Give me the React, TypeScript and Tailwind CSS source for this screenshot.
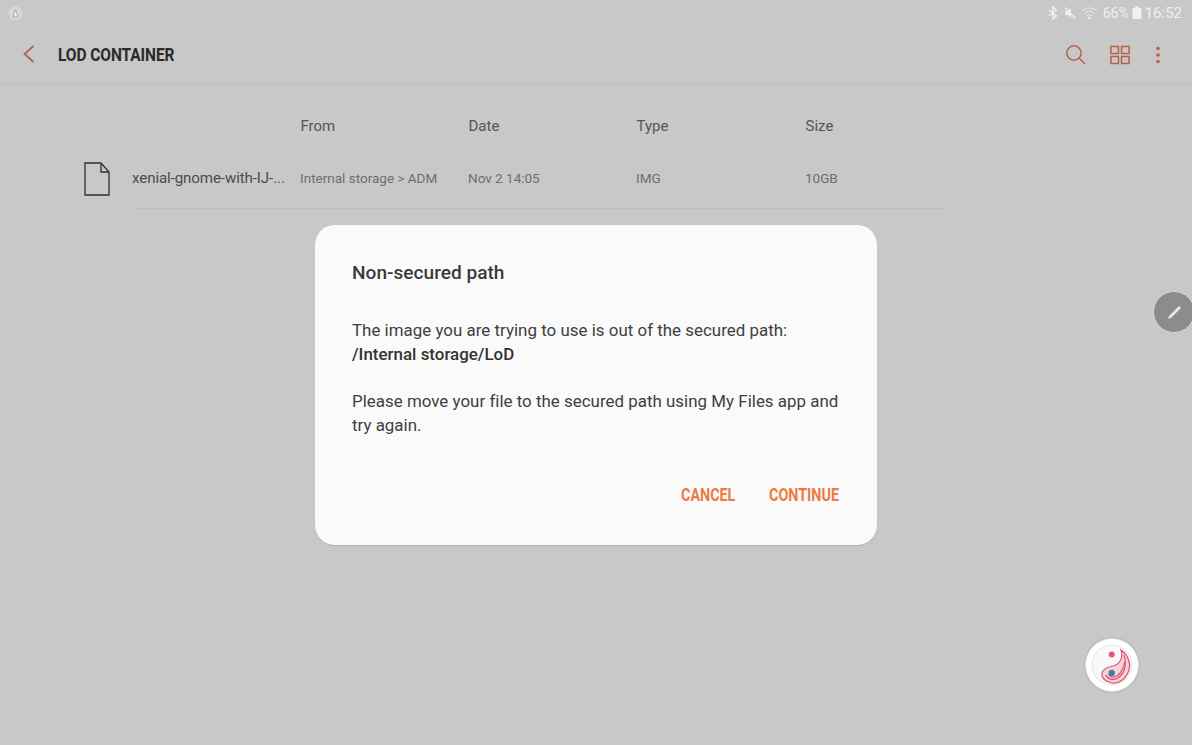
export default function App() {
  const rose = "#b5604a";
  return (
    <div className="relative w-[1192px] h-[745px] overflow-hidden bg-[#c8c8c8] font-['Roboto',sans-serif]">
      {/* status bar */}
      <div className="flex items-center justify-between h-[26px] pl-[8px] pr-[10px]">
        <svg width="15" height="15" viewBox="0 0 15 15" fill="none">
          <circle cx="7.5" cy="7.5" r="7" fill="#d8d8d8" />
          <path d="M5 11 L7.5 3.5 L10 11 Z" fill="#f2f2f2" stroke="#9a9a9a" strokeWidth="0.8" />
        </svg>
        <div className="flex items-center text-[#f0f0f0] leading-none">
          <svg width="12" height="14" viewBox="0 0 12 14" fill="none" stroke="#f0f0f0" strokeWidth="1.4" className="mr-[4px]">
            <path d="M2 4 L9.5 10 L6 13 V1 L9.5 4 L2 10" />
          </svg>
          <svg width="14" height="14" viewBox="0 0 14 14" className="mr-[4px]">
            <path d="M2 5 H5 L8 2 V12 L5 9 H2 Z" fill="#f0f0f0" />
            <path d="M2 1.5 L12.5 12.5" stroke="#f0f0f0" strokeWidth="1.5" />
          </svg>
          <svg width="17" height="14" viewBox="0 0 17 14" fill="none" stroke="#e8e8e8" strokeWidth="1" className="mr-[5px]">
            <path d="M1 5 C5 1 12 1 16 5 M3.5 7.5 C6.5 4.5 10.5 4.5 13.5 7.5 M6 10 C7.5 8.5 9.5 8.5 11 10" />
            <circle cx="8.5" cy="12" r="1" fill="#e8e8e8" />
          </svg>
          <span className="text-[14px]">66%</span>
          <svg width="10" height="14" viewBox="0 0 10 14" className="ml-[3px] mr-[3px]">
            <rect x="3" y="0.5" width="4" height="2" fill="#f0f0f0" />
            <rect x="0.5" y="2" width="9" height="11" rx="1" fill="#f0f0f0" />
          </svg>
          <span className="text-[15px]">16:52</span>
        </div>
      </div>

      {/* app bar */}
      <div className="flex items-center h-[58px] border-b border-[#bfbfbf] pl-[22px] pr-[32px]">
        <svg width="14" height="20" viewBox="0 0 14 20" fill="none" stroke={rose} strokeWidth="1.8" className="mb-[2px]">
          <path d="M11.5 2 L2.5 10 L11.5 18" />
        </svg>
        <span className="ml-[22px] inline-block w-[116px] whitespace-nowrap text-[18px] font-bold text-[#2a2a2a] origin-left scale-x-[0.862] tracking-[-0.1px]">LOD CONTAINER</span>
        <div className="ml-auto flex items-center">
          <svg width="22" height="22" viewBox="0 0 22 22" fill="none" stroke={rose} strokeWidth="1.5">
            <circle cx="9" cy="9" r="7.2" />
            <path d="M14.2 14.2 L20 20" />
          </svg>
          <svg width="20" height="20" viewBox="0 0 20 20" fill="none" stroke={rose} strokeWidth="1.5" className="ml-[23px]">
            <rect x="1" y="1.5" width="7.5" height="7" />
            <rect x="11.5" y="1.5" width="7.5" height="7" />
            <rect x="1" y="11.5" width="7.5" height="7" />
            <rect x="11.5" y="11.5" width="7.5" height="7" />
          </svg>
          <svg width="4" height="18" viewBox="0 0 4 18" fill={rose} className="ml-[26px]">
            <circle cx="2" cy="2.5" r="1.8" />
            <circle cx="2" cy="9" r="1.8" />
            <circle cx="2" cy="15.5" r="1.8" />
          </svg>
        </div>
      </div>

      {/* table */}
      <div className="grid grid-cols-[168px_168px_168px_169px_auto] pl-[132.5px] w-[948px] pt-[31px] text-[15px] leading-[22px] text-[#555555]">
        <div />
        <div>From</div>
        <div>Date</div>
        <div>Type</div>
        <div>Size</div>
      </div>
      <div className="relative ml-[133px] w-[815px] h-[51px] border-b border-[#bebebe] mt-[21px]">
        <svg width="28" height="36" viewBox="0 0 28 36" fill="none" stroke="#2f2f2f" strokeWidth="1.3" className="absolute left-[-50px] top-[3px]">
          <path d="M2 2 H18 L26 11 V34 H2 Z" />
          <path d="M18 2 V11 H26" />
        </svg>
        <div className="grid grid-cols-[167px_168px_168px_169px_auto] pt-[10px] text-[13.5px] leading-[20px] text-[#6e6e6e]">
          <div className="ml-[-1px] text-[15.1px] text-[#4c4c4c] whitespace-nowrap tracking-[-0.1px]">xenial-gnome-with-IJ-...</div>
          <div className="whitespace-nowrap">Internal storage &gt; ADM</div>
          <div>Nov 2 14:05</div>
          <div>IMG</div>
          <div>10GB</div>
        </div>
      </div>

      {/* dialog */}
      <div className="absolute left-[315px] top-[225px] w-[562px] h-[320px] rounded-[20px] bg-[#fafafa] shadow-[0_1px_1px_rgba(0,0,0,0.12)] px-[37px] pt-[34px]">
        <div className="text-[19.1px] leading-[28px] text-[#3a3a3a] font-medium">Non-secured path</div>
        <div className="mt-[32px] text-[16.9px] leading-[23.7px] text-[#3f3f3f] tracking-[0.02px]">
          <div>The image you are trying to use is out of the secured path:</div>
          <div className="font-medium text-[#333333]">/Internal storage/LoD</div>
          <div className="mt-[24px]">Please move your file to the secured path using My Files app and try again.</div>
        </div>
        <div className="absolute left-[366px] bottom-[38px] flex gap-[34px] text-[17.5px] leading-[24px] font-bold text-[#ec7a45]">
          <span className="inline-block w-[54px] whitespace-nowrap origin-left scale-x-[0.82]">CANCEL</span>
          <span className="inline-block w-[71px] whitespace-nowrap origin-left scale-x-[0.82]">CONTINUE</span>
        </div>
      </div>

      {/* edit handle */}
      <div className="absolute left-[1153px] top-[291px] w-[42px] h-[42px] rounded-full bg-[#8c8c8c] border border-[#d8d8d8] flex items-center justify-center">
        <svg width="18" height="18" viewBox="0 0 18 18" className="ml-[1px]">
          <path d="M2 16 L3 13 L13 3 L15 5 L5 15 Z" fill="#e8e8e8" />
        </svg>
      </div>

      {/* floating app button */}
      <div className="absolute left-[1085px] top-[638px] w-[54px] h-[54px] rounded-full bg-white border border-[#e0e0e0] flex items-center justify-center shadow-[0_0_2px_rgba(0,0,0,0.25)]">
        <svg width="42" height="42" viewBox="0 0 42 42" fill="none">
          <circle cx="21" cy="21" r="20" fill="#f8f8f8" stroke="#e6e6e6" />
          <circle cx="20.7" cy="10.5" r="3" fill="#dd5a70" />
          <path d="M30 6 C37 11 40 19 38 26 C35 35 28 40 21 39 C15 38 10 34 11 29 C12 25 17 23 22 22 C28 20.5 33 14 30 6 Z" fill="#f7d4d8" stroke="#d8566c" strokeWidth="1.2" />
          <path d="M33 11 C36 20 34 29 27 34 C22 37 16 35 15 31" stroke="#d8566c" strokeWidth="1.2" />
          <path d="M33.5 18 C33 24 29 32 23 33 C20 33.5 18 32 18 30" stroke="#d8566c" strokeWidth="1.2" />
          <circle cx="20.7" cy="29" r="3.2" fill="#3f7fa8" />
        </svg>
      </div>
    </div>
  );
}
